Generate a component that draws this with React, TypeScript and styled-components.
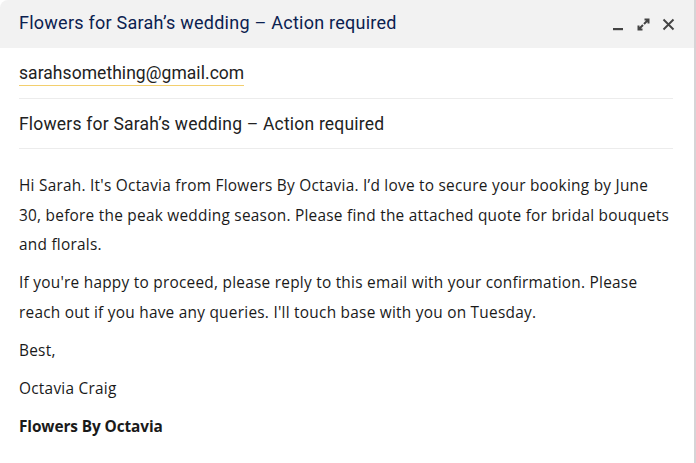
import React from 'react';
import styled, { createGlobalStyle } from 'styled-components';

const Global = createGlobalStyle`
  html, body { margin: 0; padding: 0; background: #fff; }
  * { box-sizing: border-box; }
`;

const Window = styled.div`
  width: 696px;
  height: 463px;
  background: #fff;
  border-right: 2px solid #d6d4d6;
  overflow: hidden;
`;

const Header = styled.div`
  height: 48px;
  background: #f2f2f2;
  border-top-left-radius: 8px;
  display: flex;
  align-items: center;
  padding: 0 18px 3px 19px;
`;

const Title = styled.div`
  flex: 1;
  font-family: Roboto, "Open Sans", sans-serif;
  font-size: 18px;
  color: #0b2150;
  letter-spacing: 0.25px;
`;

const Actions = styled.div`
  display: flex;
  align-items: center;
  gap: 9px;
  margin-top: 3px;
`;

const IconButton = styled.button`
  width: 16px;
  height: 16px;
  padding: 0;
  border: 0;
  background: none;
  color: #444;
  display: flex;
  align-items: center;
  justify-content: center;
`;

const Fields = styled.div`
  padding: 0 21px 0 19px;
`;

const Field = styled.div<{ $h: number }>`
  height: ${p => p.$h}px;
  display: flex;
  align-items: center;
  border-bottom: 1px solid #ececec;
  font-family: Roboto, "Open Sans", sans-serif;
  font-size: 17.5px;
  letter-spacing: 0.2px;
  color: #222;
`;

const Recipient = styled.span`
  border-bottom: 1px solid #f3cf6e;
  padding-bottom: 2px;
  margin-top: 2px;
  letter-spacing: 0.05px;
`;

const Body = styled.div`
  padding: 22px 0 0 19px;
  font-family: "Open Sans", Lato, sans-serif;
  font-size: 15.4px;
  letter-spacing: 0.25px;
  line-height: 29.5px;
  color: #1a1a1a;
  white-space: nowrap;
`;

const Para = styled.p<{ $bold?: boolean }>`
  margin: 0 0 8.5px 0;
  font-weight: ${p => (p.$bold ? 700 : 400)};
  letter-spacing: ${p => (p.$bold ? '-0.1px' : 'inherit')};
`;

export default function App() {
  return (
    <Window>
      <Global />
      <Header>
        <Title>Flowers for Sarah’s wedding – Action required</Title>
        <Actions>
          <IconButton aria-label="Minimize">
            <svg width="12" height="16" viewBox="0 0 12 16">
              <rect x="1" y="12" width="10" height="2.2" fill="currentColor" />
            </svg>
          </IconButton>
          <IconButton aria-label="Full screen">
            <svg width="15" height="15" viewBox="0 0 15 15" fill="none" stroke="currentColor" strokeWidth="2">
              <path d="M8.5 2.5h4v4M12.5 2.5l-4.5 4.5M6.5 12.5h-4v-4M2.5 12.5l4.5-4.5" />
            </svg>
          </IconButton>
          <IconButton aria-label="Close">
            <svg width="13" height="13" viewBox="0 0 13 13" fill="none" stroke="currentColor" strokeWidth="1.9">
              <path d="M1.5 1.5l10 10M11.5 1.5l-10 10" />
            </svg>
          </IconButton>
        </Actions>
      </Header>
      <Fields>
        <Field $h={51}>
          <Recipient>sarahsomething@gmail.com</Recipient>
        </Field>
        <Field $h={50}>Flowers for Sarah’s wedding – Action required</Field>
      </Fields>
      <Body>
        <Para>
          Hi Sarah. It's Octavia from Flowers By Octavia. I’d love to secure your booking by June
          <br />
          30, before the peak wedding season. Please find the attached quote for bridal bouquets
          <br />
          and florals.
        </Para>
        <Para>
          If you're happy to proceed, please reply to this email with your confirmation. Please
          <br />
          reach out if you have any queries. I'll touch base with you on Tuesday.
        </Para>
        <Para>Best,</Para>
        <Para>Octavia Craig</Para>
        <Para $bold>Flowers By Octavia</Para>
      </Body>
    </Window>
  );
}
